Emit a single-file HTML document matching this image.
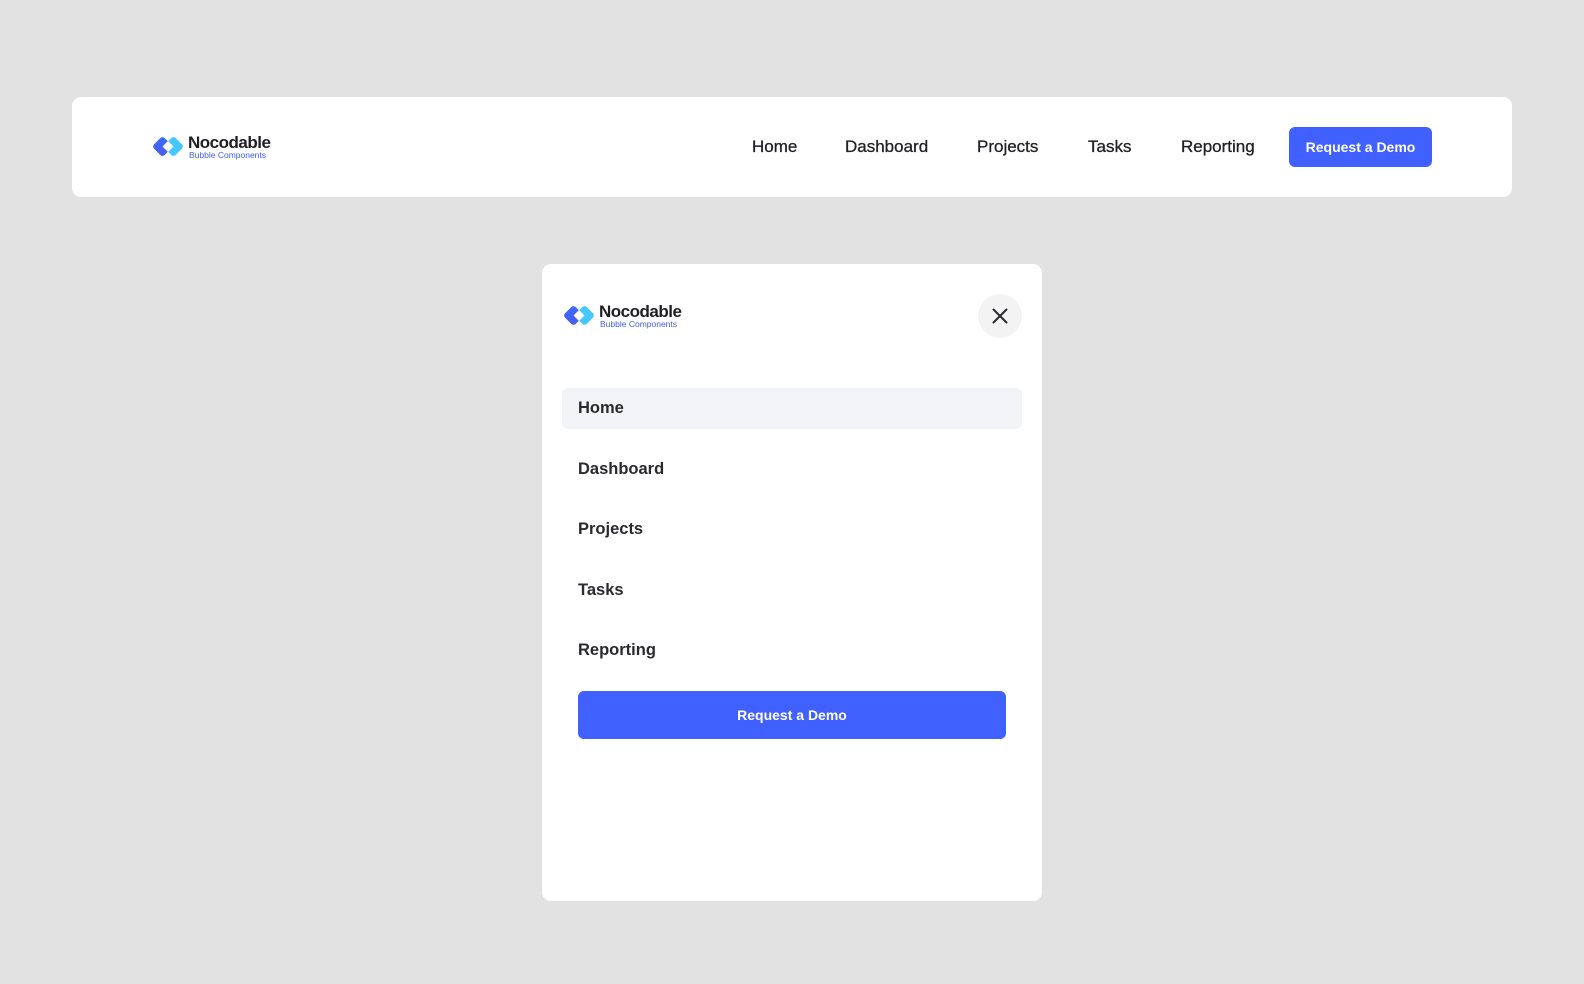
<!DOCTYPE html>
<html><head><style>
*{margin:0;padding:0;box-sizing:border-box}
body{width:1584px;height:984px;background:#e2e2e2;font-family:"Liberation Sans",sans-serif;position:relative;overflow:hidden;color:#27272a}
.bar{position:absolute;left:72px;top:97px;width:1440px;height:100px;background:#fff;border-radius:9px}
.logo{position:absolute;width:125px;height:26px}
.logo .ic{position:absolute;left:0;top:0;width:32px;height:26px}
.logo .t1{position:absolute;left:36px;top:-1px;font-weight:bold;font-size:17px;letter-spacing:-0.5px;color:#1f1f23}
.logo .t2{position:absolute;left:37px;top:16px;font-size:8.5px;color:#3f5cff}
.nav a{position:absolute;top:40px;font-size:17px;color:#222226;text-decoration:none;-webkit-text-stroke:0.3px #222226}
.btn{position:absolute;background:#4061ff;color:#fff;border-radius:6px;font-weight:bold;font-size:14px;text-align:center}
.panel{position:absolute;left:542px;top:264px;width:500px;height:637px;background:#fff;border-radius:9px}
.item{position:absolute;left:20px;width:460px;height:41px;border-radius:6px;font-size:16.5px;font-weight:bold;padding-left:16px;line-height:41px;color:#2a2a2e}
.close{position:absolute;left:436px;top:30px;width:44px;height:44px;border-radius:50%;background:#f3f3f4}
</style></head><body>
<svg width="0" height="0" style="position:absolute"><defs>
<linearGradient id="g1" x1="0" y1="0" x2="1" y2="1"><stop offset="0" stop-color="#3a6bff"/><stop offset="1" stop-color="#4a5cf0"/></linearGradient>
<symbol id="lg" viewBox="0 0 32 26">
<rect x="3" y="5" width="15" height="15" rx="3" transform="rotate(45 10.5 12.5)" fill="url(#g1)"/>
<rect x="14" y="5" width="15" height="15" rx="3" transform="rotate(45 21.5 12.5)" fill="#45c8ff"/>
<path d="M16 7 L21.5 12.5 L16 18 L10.5 12.5Z" fill="#fff"/>
</symbol></defs></svg>
<div class="bar">
<div class="logo" style="left:80px;top:37px"><svg class="ic"><use href="#lg"/></svg><div class="t1">Nocodable</div><div class="t2">Bubble Components</div></div>
<div class="nav">
<a style="left:680px">Home</a><a style="left:773px">Dashboard</a><a style="left:905px">Projects</a><a style="left:1016px">Tasks</a><a style="left:1109px">Reporting</a>
</div>
<div class="btn" style="left:1217px;top:30px;width:143px;height:40px;line-height:40px">Request a Demo</div>
</div>
<div class="panel">
<div class="logo" style="left:21px;top:39px"><svg class="ic"><use href="#lg"/></svg><div class="t1">Nocodable</div><div class="t2">Bubble Components</div></div>
<div class="close"><svg width="44" height="44"><path d="M15.5 15.5L28.5 28.5M28.5 15.5L15.5 28.5" stroke="#2a2a2e" stroke-width="2" stroke-linecap="round"/></svg></div>
<div class="item" style="top:124px;background:#f3f4f8">Home</div>
<div class="item" style="top:185px">Dashboard</div>
<div class="item" style="top:245px">Projects</div>
<div class="item" style="top:306px">Tasks</div>
<div class="item" style="top:366px">Reporting</div>
<div class="btn" style="left:36px;top:427px;width:428px;height:48px;line-height:48px">Request a Demo</div>
</div>
</body></html>
